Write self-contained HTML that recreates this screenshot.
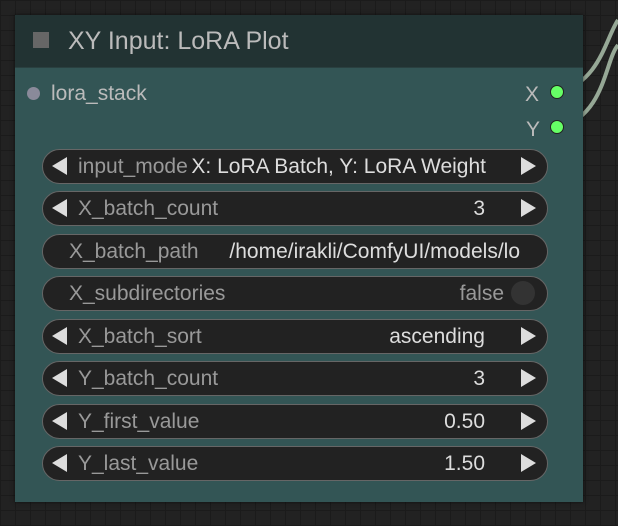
<!DOCTYPE html>
<html><head><style>
body{margin:0;width:618px;height:526px;overflow:hidden;background:#222;font-family:"Liberation Sans",sans-serif;position:relative;
background-image:linear-gradient(#1b1b1b 1px,transparent 1px),linear-gradient(90deg,#1b1b1b 1px,transparent 1px);background-size:15px 15px;}
.node{position:absolute;left:15px;top:15px;width:568px;height:487px;background:#335555;box-shadow:0 0 4px rgba(0,0,0,.6)}
.title{position:absolute;left:0;top:0;width:568px;height:52px;background:#223333;border-bottom:1px solid #2a4040}
.title .sq{position:absolute;left:18px;top:17px;width:16px;height:16px;background:#666}
.title .t{position:absolute;left:53px;top:12px;font-size:25px;color:#bbb}
.lbl{position:absolute;font-size:21px;color:#bbb}
.dot{position:absolute;width:12px;height:12px;border-radius:50%}
.w{position:absolute;left:27px;width:504px;height:33px;background:#222;border:1px solid #666;border-radius:18px;font-size:21px;color:#999;line-height:33px}
.w .n{position:absolute;left:35px}
.w .v{position:absolute;right:62px;color:#ddd}
.w svg{position:absolute;top:7px}
</style></head><body>
<svg width="618" height="526" style="position:absolute;left:0;top:0">
<path d="M560 92 C600 80 605 40 618 20" stroke="#96a896" stroke-width="4" fill="none"/>
<path d="M560 127 C605 115 605 60 618 45" stroke="#96a896" stroke-width="4" fill="none"/>
</svg>
<div class="node">
<div class="title"><div class="sq"></div><div class="t">XY Input: LoRA Plot</div></div>
<div class="dot" style="left:12px;top:72px;background:#8a8a9a;width:13px;height:13px"></div>
<div class="lbl" style="left:36px;top:67px">lora_stack</div>
<div class="lbl" style="left:510px;top:68px">X</div>
<div class="lbl" style="left:511px;top:103px">Y</div>
<div class="dot" style="left:535px;top:70px;background:#6f6;border:1px solid #222"></div>
<div class="dot" style="left:535px;top:105px;background:#6f6;border:1px solid #222"></div>

<div class="w" style="top:134px"><svg width="16" height="19" style="left:9px"><polygon points="15,0 15,18 0,9" fill="#ddd"/></svg><span class="n">input_mode</span><span class="v" style="right:61px">X: LoRA Batch, Y: LoRA Weight</span><svg width="16" height="19" style="right:10px"><polygon points="0,0 0,18 15,9" fill="#ddd"/></svg></div>
<div class="w" style="top:176px"><svg width="16" height="19" style="left:9px"><polygon points="15,0 15,18 0,9" fill="#ddd"/></svg><span class="n">X_batch_count</span><span class="v">3</span><svg width="16" height="19" style="right:10px"><polygon points="0,0 0,18 15,9" fill="#ddd"/></svg></div>
<div class="w" style="top:219px"><span class="n" style="left:26px">X_batch_path</span><span class="v" style="right:27px">/home/irakli/ComfyUI/models/lo</span></div>
<div class="w" style="top:261px"><span class="n" style="left:26px">X_subdirectories</span><span class="v" style="right:43px;color:#999">false</span><span style="position:absolute;right:12px;top:4px;width:24px;height:24px;border-radius:50%;background:#333"></span></div>
<div class="w" style="top:304px"><svg width="16" height="19" style="left:9px"><polygon points="15,0 15,18 0,9" fill="#ddd"/></svg><span class="n">X_batch_sort</span><span class="v">ascending</span><svg width="16" height="19" style="right:10px"><polygon points="0,0 0,18 15,9" fill="#ddd"/></svg></div>
<div class="w" style="top:346px"><svg width="16" height="19" style="left:9px"><polygon points="15,0 15,18 0,9" fill="#ddd"/></svg><span class="n">Y_batch_count</span><span class="v">3</span><svg width="16" height="19" style="right:10px"><polygon points="0,0 0,18 15,9" fill="#ddd"/></svg></div>
<div class="w" style="top:389px"><svg width="16" height="19" style="left:9px"><polygon points="15,0 15,18 0,9" fill="#ddd"/></svg><span class="n">Y_first_value</span><span class="v">0.50</span><svg width="16" height="19" style="right:10px"><polygon points="0,0 0,18 15,9" fill="#ddd"/></svg></div>
<div class="w" style="top:431px"><svg width="16" height="19" style="left:9px"><polygon points="15,0 15,18 0,9" fill="#ddd"/></svg><span class="n">Y_last_value</span><span class="v">1.50</span><svg width="16" height="19" style="right:10px"><polygon points="0,0 0,18 15,9" fill="#ddd"/></svg></div>
</div>
</body></html>
